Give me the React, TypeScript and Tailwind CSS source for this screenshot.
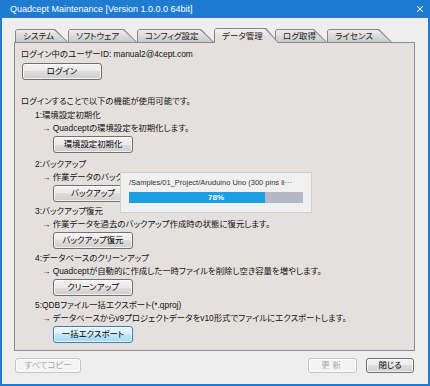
import { X } from 'lucide-react';

const tabs = [
  { label: 'システム', w: 'w-[53px]', active: false },
  { label: 'ソフトウェア', w: 'w-[69px]', active: false },
  { label: 'コンフィグ設定', w: 'w-[77px]', active: false },
  { label: 'データ管理', w: 'w-[65px] -mr-[4px]', active: true },
  { label: 'ログ取得', w: 'w-[52px]', active: false },
  { label: 'ライセンス', w: 'w-[65px]', active: false },
];

const sections = [
  {
    mt: 'mt-px',
    title: '1:環境設定初期化',
    desc: '→ Quadceptの環境設定を初期化します。',
    button: '環境設定初期化',
    primary: false,
  },
  {
    mt: 'mt-[5px]',
    title: '2:バックアップ',
    desc: '→ 作業データのバックアップを作成します。',
    button: 'バックアップ',
    primary: false,
  },
  {
    mt: 'mt-[3px]',
    title: '3:バックアップ復元',
    desc: '→ 作業データを過去のバックアップ作成時の状態に復元します。',
    button: 'バックアップ復元',
    primary: false,
  },
  {
    mt: 'mt-[3px]',
    title: '4:データベースのクリーンアップ',
    desc: '→ Quadceptが自動的に作成した一時ファイルを削除し空き容量を増やします。',
    button: 'クリーンアップ',
    primary: false,
  },
  {
    mt: 'mt-[3px]',
    title: '5:QDBファイル一括エクスポート(*.qproj)',
    desc: '→ データベースからv9プロジェクトデータをv10形式でファイルにエクスポートします。',
    button: '一括エクスポート',
    primary: true,
  },
];

const btnBase =
  'flex items-center justify-center rounded-[3px] border text-[8.4px] leading-none shadow-[inset_0_0_0_1px_rgba(255,255,255,0.7)]';
const btnNormal =
  'border-[#707070] text-black bg-[linear-gradient(#f3f3f3_0%,#ebebeb_50%,#dddddd_50%,#cfcfcf_100%)]';
const btnPrimary =
  'border-[#3c7fb1] text-black bg-[linear-gradient(#eaf6fd_0%,#d9f0fc_50%,#bee6fd_50%,#a7d9f5_100%)]';
const btnDisabled = 'border-[#c2c4c6] text-[#a8a8a8] bg-[#f4f4f4]';

function Tab({ label, w, active }: { label: string; w: string; active: boolean }) {
  return (
    <div
      className={`${w} ${
        active ? 'h-[15px] relative z-10' : 'h-[13px] mb-px'
      } bg-[#85878c] pt-px px-px [clip-path:polygon(0_2px,2px_0,calc(100%-13px)_0,100%_100%,0_100%)]`}
    >
      <div
        className={`h-full flex items-center pl-[7px] text-[8.5px] leading-none text-[#1a1a1a] [clip-path:polygon(0_1px,1px_0,calc(100%-13px)_0,100%_100%,0_100%)] ${
          active
            ? 'bg-[linear-gradient(#f2f0ef,#e4e0de_60%)]'
            : 'bg-[linear-gradient(#eeeeee,#c8c8c8)]'
        }`}
      >
        {label}
      </div>
    </div>
  );
}

export default function App() {
  return (
    <div
      className={`relative w-[430px] h-[386px] bg-[#1e7bd0] px-[2px] pb-[2px] flex flex-col font-['Liberation_Sans','Noto_Sans_CJK_JP',sans-serif] [font-feature-settings:'palt']`}
    >
      {/* title bar */}
      <div className="h-[18px] flex items-center justify-between pl-[8px] pr-[3px] text-white text-[9px] leading-none">
        <span>Quadcept Maintenance [Version 1.0.0.0 64bit]</span>
        <X className="w-[10px] h-[10px]" strokeWidth={2.5} />
      </div>

      <div className="flex-1 bg-[#eeeeee] pl-[12px] pt-[10px] flex flex-col">
        {/* tabs */}
        <div className="flex items-end h-[15px] -mb-px pl-px relative z-10">
          {tabs.map((t) => (
            <Tab key={t.label} {...t} />
          ))}
        </div>

        {/* panel */}
        <div className="w-[401px] h-[309px] border border-[#8b8d92] bg-[#e4e0de] pl-[6px] pt-[5px] flex flex-col text-[8.4px] leading-[13px] text-[#111]">
          <p>ログイン中のユーザーID: manual2@4cept.com</p>
          <button className={`${btnBase} ${btnNormal} mt-[2px] ml-px w-[80px] h-[17px]`}>ログイン</button>
          <p className="mt-[15px]">ログインすることで以下の機能が使用可能です。</p>

          {sections.map((s) => (
            <div key={s.title} className={`${s.mt} flex flex-col`}>
              <p className="ml-[14px]">{s.title}</p>
              <p className="ml-[21px] whitespace-nowrap">{s.desc}</p>
              <button
                className={`${btnBase} ${s.primary ? btnPrimary : btnNormal} mt-px ml-[32px] w-[80px] h-[17px]`}
              >
                {s.button}
              </button>
            </div>
          ))}
        </div>

        {/* bottom buttons */}
        <div className="w-[401px] mt-[7px] flex items-center justify-between px-px">
          <button className={`${btnBase} ${btnDisabled} w-[66px] h-[15px]`}>すべてコピー</button>
          <div className="flex gap-[9px]">
            <button className={`${btnBase} ${btnDisabled} w-[49px] h-[15px] tracking-[3px]`}>更新</button>
            <button className={`${btnBase} ${btnNormal} border-[#4a4a4a] w-[48px] h-[15px]`}>閉じる</button>
          </div>
        </div>
      </div>

      {/* progress popup */}
      <div className="absolute left-[120px] top-[172px] w-[192px] h-[41px] bg-[#f0f0f0] border border-[#cfcfcf] px-[8px] pt-[5px]">
        <p className="text-[7.5px] leading-[10px] text-[#333] whitespace-nowrap">
          /Samples/01_Project/Aruduino Uno (300 pins li···
        </p>
        <div className="relative mt-[4px] w-[174px] h-[11px] bg-[#b3b7c6]">
          <div className="h-full bg-[#1ba0e2]" style={{ width: '78%' }} />
          <span className="absolute inset-0 flex items-center justify-center text-white text-[8px] font-bold leading-none">
            78%
          </span>
        </div>
      </div>
    </div>
  );
}
